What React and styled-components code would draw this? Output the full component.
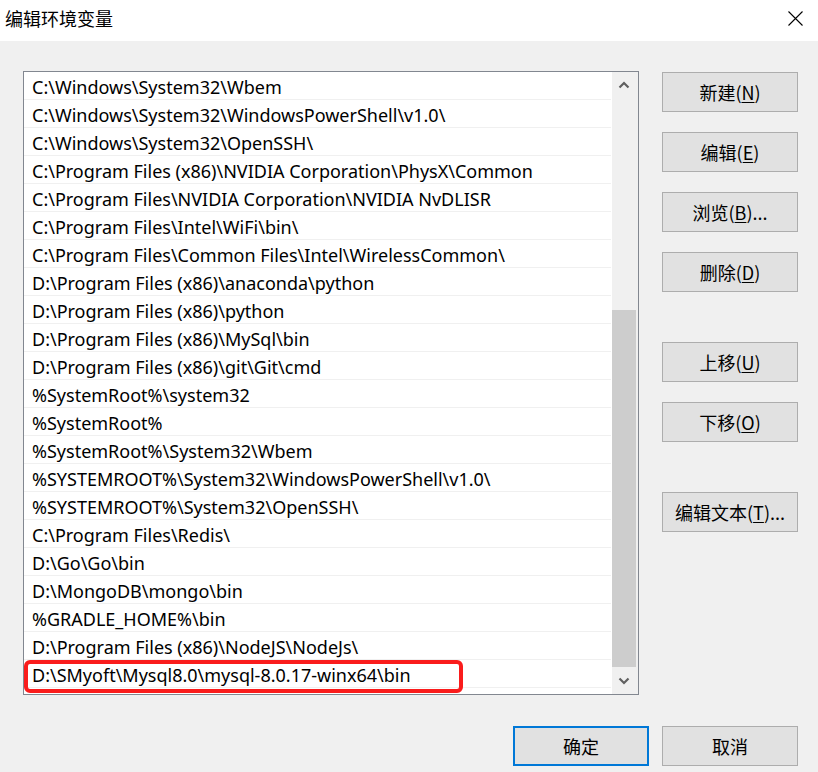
import React from "react";
import styled, { createGlobalStyle } from "styled-components";

const GlobalStyle = createGlobalStyle`
  html, body {
    margin: 0;
    padding: 0;
    background: #f0f0f0;
    overflow: hidden;
  }
  body {
    font-family: "Noto Sans", "Noto Sans CJK SC", sans-serif;
    color: #000;
  }
`;

const Window = styled.div`
  width: 818px;
  height: 772px;
  display: flex;
  flex-direction: column;
  background: #f0f0f0;
`;

const TitleBar = styled.div`
  height: 41px;
  box-sizing: border-box;
  flex: none;
  background: #fff;
  display: flex;
  align-items: flex-start;
  justify-content: space-between;
  padding: 6px 15px 0 5px;
`;

const Title = styled.div`
  font-family: "Noto Sans CJK SC", sans-serif;
  font-size: 18px;
  line-height: 24px;
`;

const CloseIcon = styled.svg`
  width: 15px;
  height: 15px;
  margin-top: 5px;
  display: block;
`;

const Body = styled.div`
  padding: 30px 20px 0 23px;
  display: flex;
  flex-direction: column;
`;

const Main = styled.div`
  display: flex;
  gap: 23px;
`;

const ListBox = styled.div`
  position: relative;
  width: 616px;
  height: 624px;
  box-sizing: border-box;
  border: 1px solid #828790;
  background: #fff;
  display: flex;
  overflow: hidden;
`;

const Rows = styled.div`
  flex: 1;
  display: flex;
  flex-direction: column;
  padding-right: 1px;
`;

const Row = styled.div`
  height: 27px;
  flex: none;
  border-bottom: 1px solid #f0f0f0;
  padding-left: 8px;
  font-size: 18px;
  line-height: 30px;
  white-space: nowrap;
`;

const ScrollBar = styled.div`
  width: 26px;
  flex: none;
  background: #f0f0f0;
  display: flex;
  flex-direction: column;
`;

const Arrow = styled.div`
  height: 26px;
  flex: none;
  display: flex;
  align-items: center;
  justify-content: center;
  padding-right: 2px;
`;

const Track = styled.div`
  flex: 1;
  padding: 212px 2px 0 0;
`;

const Thumb = styled.div`
  height: 357px;
  background: #cdcdcd;
`;

const Highlight = styled.div`
  position: absolute;
  left: 0;
  top: 588px;
  width: 439px;
  height: 33px;
  box-sizing: border-box;
  border: 4px solid #fa1c1c;
  border-radius: 6px;
  pointer-events: none;
`;

const Side = styled.div`
  width: 136px;
  padding-top: 1px;
  display: flex;
  flex-direction: column;
`;

const Button = styled.div`
  width: 136px;
  height: 40px;
  box-sizing: border-box;
  margin-top: ${(p) => p.$gap || 0}px;
  background: #e1e1e1;
  border: ${(p) => (p.$primary ? "2px solid #0078d7" : "1px solid #adadad")};
  display: flex;
  align-items: center;
  justify-content: center;
  font-family: "Noto Sans CJK SC", "Noto Sans", sans-serif;
  font-size: 18px;
  u {
    text-underline-offset: 2px;
  }
`;

const Footer = styled.div`
  margin-top: 31px;
  display: flex;
  justify-content: flex-end;
  gap: 13px;
`;

const paths = [
  String.raw`C:\Windows\System32\Wbem`,
  String.raw`C:\Windows\System32\WindowsPowerShell\v1.0\ `.trim(),
  String.raw`C:\Windows\System32\OpenSSH\ `.trim(),
  String.raw`C:\Program Files (x86)\NVIDIA Corporation\PhysX\Common`,
  String.raw`C:\Program Files\NVIDIA Corporation\NVIDIA NvDLISR`,
  String.raw`C:\Program Files\Intel\WiFi\bin\ `.trim(),
  String.raw`C:\Program Files\Common Files\Intel\WirelessCommon\ `.trim(),
  String.raw`D:\Program Files (x86)\anaconda\python`,
  String.raw`D:\Program Files (x86)\python`,
  String.raw`D:\Program Files (x86)\MySql\bin`,
  String.raw`D:\Program Files (x86)\git\Git\cmd`,
  String.raw`%SystemRoot%\system32`,
  String.raw`%SystemRoot%`,
  String.raw`%SystemRoot%\System32\Wbem`,
  String.raw`%SYSTEMROOT%\System32\WindowsPowerShell\v1.0\ `.trim(),
  String.raw`%SYSTEMROOT%\System32\OpenSSH\ `.trim(),
  String.raw`C:\Program Files\Redis\ `.trim(),
  String.raw`D:\Go\Go\bin`,
  String.raw`D:\MongoDB\mongo\bin`,
  String.raw`%GRADLE_HOME%\bin`,
  String.raw`D:\Program Files (x86)\NodeJS\NodeJs\ `.trim(),
  String.raw`D:\SMyoft\Mysql8.0\mysql-8.0.17-winx64\bin`,
];

const sideButtons = [
  { label: "新建", key: "N", gap: 0 },
  { label: "编辑", key: "E", gap: 20 },
  { label: "浏览", key: "B", gap: 20, more: true },
  { label: "删除", key: "D", gap: 20 },
  { label: "上移", key: "U", gap: 50 },
  { label: "下移", key: "O", gap: 20 },
  { label: "编辑文本", key: "T", gap: 50, more: true },
];

function Chevron({ up }) {
  return (
    <svg width="12" height="8" viewBox="0 0 12 8">
      <path
        d={up ? "M1.5 6.5 L6 2 L10.5 6.5" : "M1.5 1.5 L6 6 L10.5 1.5"}
        fill="none"
        stroke="#606060"
        strokeWidth="2.2"
      />
    </svg>
  );
}

function App() {
  return (
    <Window>
      <GlobalStyle />
      <TitleBar>
        <Title>编辑环境变量</Title>
        <CloseIcon viewBox="0 0 15 15">
          <path d="M0.5 0.5 L14.5 14.5 M14.5 0.5 L0.5 14.5" stroke="#000" strokeWidth="1.1" />
        </CloseIcon>
      </TitleBar>
      <Body>
        <Main>
          <ListBox>
            <Rows>
              {paths.map((p) => (
                <Row key={p}>{p}</Row>
              ))}
            </Rows>
            <ScrollBar>
              <Arrow>
                <Chevron up />
              </Arrow>
              <Track>
                <Thumb />
              </Track>
              <Arrow>
                <Chevron />
              </Arrow>
            </ScrollBar>
            <Highlight />
          </ListBox>
          <Side>
            {sideButtons.map((b) => (
              <Button key={b.key} $gap={b.gap}>
                {b.label}(<u>{b.key}</u>){b.more ? "..." : ""}
              </Button>
            ))}
          </Side>
        </Main>
        <Footer>
          <Button $primary>确定</Button>
          <Button>取消</Button>
        </Footer>
      </Body>
    </Window>
  );
}

export default App;
